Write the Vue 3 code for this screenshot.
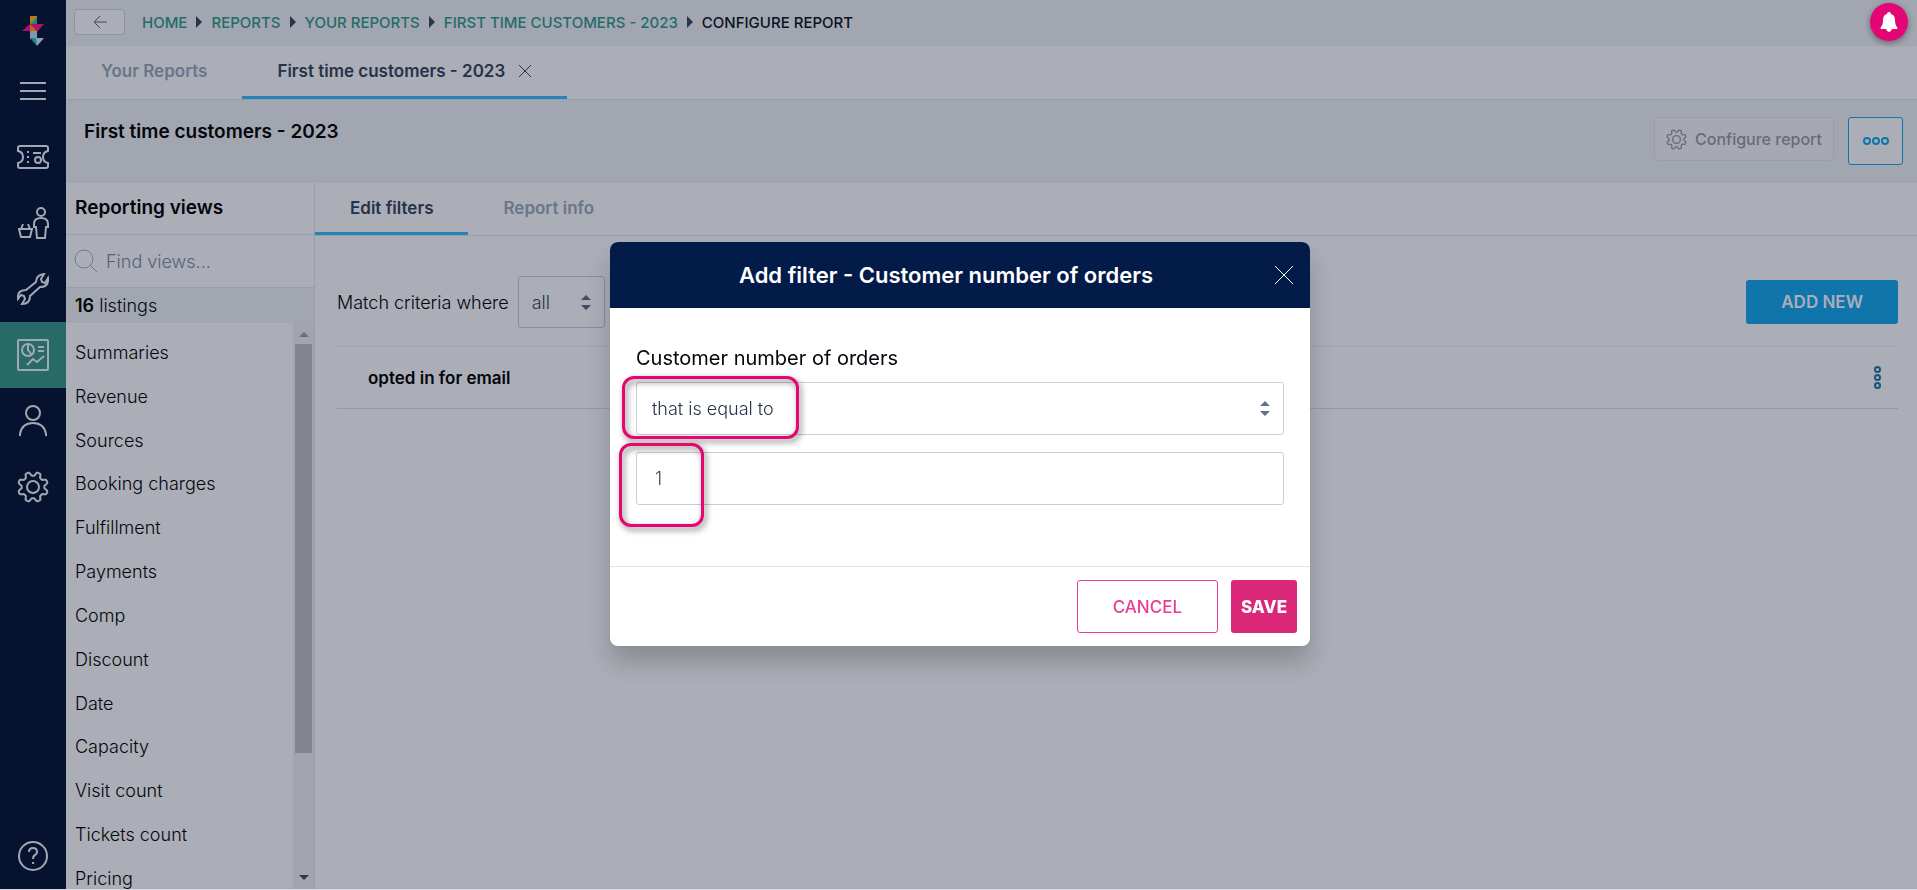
<template>
  <div class="app">
    <nav class="sidebar" aria-label="Main">
      <a href="#" class="logo" aria-label="Home">
        <svg width="22" height="30" viewBox="0 0 22 30">
          <path d="M8 0h7v8H8z" fill="#b87a1c" />
          <path d="M15 1v7H8z" fill="#1c8a7a" />
          <path d="M8 8h14l-7 8-7-1H0z" fill="#b0106a" />
          <path d="M8 8l7 7H8z" fill="#c4601c" />
          <path d="M8 15h7v8H8z" fill="#7f98b2" />
          <path d="M8 22h7v8z" fill="#1c8a7a" />
          <path d="M14 22h8l-7 8z" fill="#8ea3b8" />
        </svg>
      </a>
      <button class="side-item" aria-label="Menu">
        <svg width="30" height="30" viewBox="0 0 30 30"><path d="M2 7h26M2 15h26M2 23h26" /></svg>
      </button>
      <a href="#" class="side-item" aria-label="Tickets">
        <svg width="32" height="32" viewBox="0 0 32 32">
          <path d="M3 5h26q2 0 2 2v3q-5 1-5 6t5 6v3q0 2-2 2H3q-2 0-2-2v-3q5-1 5-6t-5-6V7q0-2 2-2z" />
          <path d="M16 12h8" />
          <circle cx="21" cy="19" r="3" />
          <path d="M11 10v2M11 15v2M11 20v2" />
        </svg>
      </a>
      <a href="#" class="side-item" aria-label="Box office">
        <svg width="32" height="32" viewBox="0 0 32 32">
          <circle cx="24" cy="5" r="4" />
          <path d="M20 31l-1-11h-2v-3q0-6 7-6t7 6v3h-2l-1 11z" />
          <path d="M1 22h15M2 22l2 8h9l2-8M4 22l2-5M13 22l-2-5" />
        </svg>
      </a>
      <a href="#" class="side-item" aria-label="Tools">
        <svg width="32" height="32" viewBox="0 0 32 32">
          <path d="M19 9q0-7 8-8l-3 5 1 3 3 1 3-5q1 9-8 9l-10 9q0 8-8 8l3-5-1-3-3-1-3 4q-1-9 8-9z" />
        </svg>
      </a>
      <a href="#" class="side-item active" aria-label="Reports">
        <svg width="32" height="32" viewBox="0 0 32 32">
          <rect x="1" y="1" width="30" height="30" rx="1" />
          <circle cx="11" cy="11" r="6" />
          <path d="M11 5v6l4 5M21 8h6M21 12h6M10 26l6-6 4 3 7-6" />
        </svg>
      </a>
      <a href="#" class="side-item" aria-label="Customers">
        <svg width="32" height="32" viewBox="0 0 32 32">
          <circle cx="16" cy="8" r="7" />
          <path d="M3 31v-2q2-11 13-11t13 11v2" />
        </svg>
      </a>
      <a href="#" class="side-item" aria-label="Settings">
        <svg width="32" height="32" viewBox="0 0 32 32">
          <path :d="gearPath" />
          <circle cx="16" cy="16" r="6" />
        </svg>
      </a>
      <a href="#" class="side-item help" aria-label="Help">
        <svg width="30" height="30" viewBox="0 0 30 30">
          <circle cx="15" cy="15" r="14" />
          <path d="M11 11q0-4 4-4t4 4q0 2-2 3t-2 4M15 21v2" />
        </svg>
      </a>
    </nav>

    <div class="page">
      <header class="topbar">
        <button class="back" aria-label="Back">
          <svg width="14" height="14" viewBox="0 0 14 14"><path d="M14 7H1M7 1L1 7l6 6" /></svg>
        </button>
        <nav class="breadcrumb" aria-label="Breadcrumb">
          <template v-for="crumb in crumbs" :key="crumb">
            <a href="#">{{ crumb }}</a>
            <i class="caret"></i>
          </template>
          <span>CONFIGURE REPORT</span>
        </nav>
      </header>

      <div class="tabs report-tabs">
        <button class="tab">Your Reports</button>
        <button class="tab active">
          First time customers - 2023
          <svg width="14" height="14" viewBox="0 0 14 14"><path d="M1 1l12 12M13 1L1 13" /></svg>
        </button>
      </div>

      <div class="report-header">
        <h1>First time customers - 2023</h1>
        <div class="report-actions">
          <button class="configure">
            <svg width="21" height="21" viewBox="0 0 32 32">
              <path :d="gearPath" />
              <circle cx="16" cy="16" r="6" />
            </svg>
            Configure report
          </button>
          <button class="more" aria-label="More actions">
            <i class="ring"></i><i class="ring"></i><i class="ring"></i>
          </button>
        </div>
      </div>

      <div class="content">
        <aside class="views">
          <h2>Reporting views</h2>
          <label class="search">
            <svg width="24" height="24" viewBox="0 0 24 24"><circle cx="10" cy="10" r="9" /><path d="M16 16l7 7" /></svg>
            <input v-model="search" type="text" placeholder="Find views..." aria-label="Find views" />
          </label>
          <div class="count"><b>16</b> listings</div>
          <div class="view-list">
            <ul>
              <li v-for="view in filteredViews" :key="view"><a href="#">{{ view }}</a></li>
            </ul>
            <div class="scrollbar">
              <i class="arrow up"></i>
              <div class="track"><div class="thumb"></div></div>
              <i class="arrow down"></i>
            </div>
          </div>
        </aside>

        <main class="editor">
          <div class="tabs">
            <button class="tab active">Edit filters</button>
            <button class="tab">Report info</button>
          </div>
          <div class="criteria">
            <label for="match">Match criteria where</label>
            <div class="select-box match">
              <select id="match" v-model="match">
                <option>all</option>
                <option>any</option>
              </select>
              <svg width="10" height="15" viewBox="0 0 10 15"><path d="M0 5l5-5 5 5zM0 10l5 5 5-5z" /></svg>
            </div>
            <button class="add-new">ADD NEW</button>
          </div>
          <div class="filter-row">
            <strong>opted in for email</strong>
            <button class="kebab" aria-label="Filter actions">
              <i class="ring"></i><i class="ring"></i><i class="ring"></i>
            </button>
          </div>
        </main>
      </div>
    </div>

    <button class="bell" aria-label="Notifications">
      <svg width="18" height="20" viewBox="0 0 18 20">
        <path d="M9 0q2 0 2 2 4 1 4 6 0 5 2 7 1 2 0 2h-5q-1 3-3 3t-3-3H1q-1 0 0-2 2-2 2-7 0-5 4-6 0-2 2-2z" />
      </svg>
    </button>

    <div class="backdrop">
      <form class="modal" role="dialog" aria-labelledby="modal-title" @submit.prevent>
        <header class="modal-header">
          <h3 id="modal-title">Add filter - Customer number of orders</h3>
          <button type="button" class="close" aria-label="Close">
            <svg width="20" height="20" viewBox="0 0 20 20"><path d="M1 1l18 18M19 1L1 19" /></svg>
          </button>
        </header>
        <div class="modal-body">
          <label for="operator">Customer number of orders</label>
          <div class="select-box">
            <select id="operator" v-model="operator">
              <option>that is equal to</option>
              <option>that is greater than</option>
              <option>that is less than</option>
            </select>
            <svg width="10" height="15" viewBox="0 0 10 15"><path d="M0 5l5-5 5 5zM0 10l5 5 5-5z" /></svg>
          </div>
          <input v-model="amount" type="text" class="amount" aria-label="Number of orders" />
        </div>
        <footer class="modal-footer">
          <button type="button" class="cancel">CANCEL</button>
          <button type="submit" class="save">SAVE</button>
        </footer>
        <div class="highlight operator-mark"></div>
        <div class="highlight amount-mark"></div>
      </form>
    </div>
  </div>
</template>

<script setup>
import { ref, computed } from 'vue';

const crumbs = ['HOME', 'REPORTS', 'YOUR REPORTS', 'FIRST TIME CUSTOMERS - 2023'];

const views = [
  'Summaries',
  'Revenue',
  'Sources',
  'Booking charges',
  'Fulfillment',
  'Payments',
  'Comp',
  'Discount',
  'Date',
  'Capacity',
  'Visit count',
  'Tickets count',
  'Pricing'
];

const search = ref('');
const match = ref('all');
const operator = ref('that is equal to');
const amount = ref('1');

const filteredViews = computed(() => {
  return views.filter(view => view.toLowerCase().includes(search.value.toLowerCase()));
});

// Gear outline: eight rounded teeth around the centre
const gearPath = (() => {
  const points = [];
  for (let i = 0; i <= 96; i++) {
    const a = (i / 96) * Math.PI * 2;
    const wave = Math.tanh(2.2 * Math.cos(a * 8 + Math.PI));
    const r = 13.2 + wave * 1.9;
    points.push(`${(16 + r * Math.sin(a)).toFixed(2)} ${(16 - r * Math.cos(a)).toFixed(2)}`);
  }
  return 'M' + points.join('L') + 'Z';
})();
</script>

<style>
body {
  margin: 0;
  background: #d5d8de;
}
</style>

<style scoped>
* {
  box-sizing: border-box;
}

.app {
  display: flex;
  height: calc(100vh - 1px);
  overflow: hidden;
  font-family: Inter, 'Liberation Sans', sans-serif;
  font-size: 18px;
  font-weight: 300;
  color: #04060c;
  background: #abaeb6;
}

button,
input,
select {
  font: inherit;
  color: inherit;
  margin: 0;
  padding: 0;
  border: 0;
  background: none;
}

a {
  color: inherit;
  text-decoration: none;
}

svg {
  display: block;
  flex: none;
  fill: none;
  stroke: currentColor;
}

h1,
h2,
h3 {
  margin: 0;
  font-weight: 500;
}

/* Sidebar */
.sidebar {
  flex: none;
  width: 66px;
  display: flex;
  flex-direction: column;
  background: #051230;
  color: #a3a7b2;
}

.logo {
  height: 58px;
  display: flex;
  justify-content: center;
  padding-top: 16px;
}

.logo svg {
  stroke: none;
}

.side-item {
  height: 66px;
  display: flex;
  align-items: center;
  justify-content: center;
}

.side-item svg {
  stroke-width: 2;
}

.side-item.active {
  background: #276a68;
}

.side-item.help {
  margin-top: auto;
}

/* Top bar */
.page {
  flex: 1;
  min-width: 0;
  display: flex;
  flex-direction: column;
}

.topbar {
  height: 46px;
  flex: none;
  display: flex;
  align-items: center;
  gap: 17px;
  padding: 0 8px 2px;
  background: #a2a6b1;
}

.back {
  width: 51px;
  height: 26px;
  display: flex;
  align-items: center;
  justify-content: center;
  border: 1px solid #8e949f;
  border-radius: 4px;
  background: #abaeb6;
  color: #3f4a5c;
}

.breadcrumb {
  display: flex;
  align-items: center;
  gap: 9px;
  font-size: 15px;
  font-weight: 500;
  color: #246c67;
}

.breadcrumb span {
  color: #0c1220;
}

.caret {
  border-left: 6px solid #27364b;
  border-top: 6px solid transparent;
  border-bottom: 6px solid transparent;
}

/* Tabs */
.tabs {
  height: 53px;
  flex: none;
  display: flex;
  border-bottom: 1px solid #999eab;
}

.tab {
  display: flex;
  align-items: center;
  gap: 13px;
  padding: 0 35px;
  border-bottom: 3px solid transparent;
  font-size: 17px;
  font-weight: 600;
  color: #6a758a;
}

.tab.active {
  border-color: #2683b7;
  color: #27324a;
}

.report-tabs {
  height: 54px;
}

/* Report header */
.report-header {
  height: 83px;
  flex: none;
  display: flex;
  justify-content: space-between;
  padding: 17px 14px 0 18px;
  background: #a2a6b1;
}

.report-header h1 {
  font-size: 19px;
  font-weight: 600;
  line-height: 30px;
}

.report-actions {
  display: flex;
  align-items: flex-start;
  gap: 14px;
}

.configure {
  height: 44px;
  display: flex;
  align-items: center;
  gap: 8px;
  padding: 0 11px;
  border: 1px solid #999ea8;
  border-radius: 3px;
  background: #a6a9b2;
  color: #676c76;
  font-size: 16px;
  font-weight: 500;
}

.configure svg {
  stroke-width: 2;
}

.more {
  width: 55px;
  height: 48px;
  display: flex;
  align-items: center;
  justify-content: center;
  gap: 1px;
  border: 1px solid #0f75ab;
  border-radius: 3px;
  background: #abaeb6;
  color: #0f75ab;
}

.ring {
  width: 8px;
  height: 8px;
  border: 2px solid currentColor;
  border-radius: 50%;
}

/* Reporting views */
.content {
  flex: 1;
  min-height: 0;
  display: flex;
}

.views {
  flex: none;
  width: 249px;
  display: flex;
  flex-direction: column;
  border-right: 1px solid #999eab;
}

.views h2 {
  height: 52px;
  flex: none;
  padding-left: 9px;
  border-bottom: 1px solid #999eab;
  font-size: 19px;
  font-weight: 600;
  line-height: 50px;
}

.search {
  height: 53px;
  flex: none;
  display: flex;
  align-items: center;
  gap: 8px;
  padding-left: 8px;
  border-bottom: 1px solid #999eab;
  color: #6f7b90;
}

.search input {
  flex: 1;
  min-width: 0;
  outline: none;
}

.search input::placeholder {
  color: #56627a;
  opacity: 1;
}

.count {
  flex: none;
  padding-left: 9px;
  background: #a2a6b1;
  line-height: 35px;
}

.count b {
  font-weight: 600;
}

.view-list {
  flex: 1;
  min-height: 0;
  display: flex;
  overflow: hidden;
}

.view-list ul {
  flex: 1;
  display: flex;
  flex-direction: column;
  margin: 0;
  padding: 20px 0 0 9px;
  list-style: none;
  line-height: 20px;
}

.view-list li {
  flex: 0 1 44px;
  display: flex;
  align-items: flex-end;
}

.view-list li:first-child {
  flex: 0 0 20px;
}

.scrollbar {
  width: 21px;
  display: flex;
  flex-direction: column;
  align-items: center;
  gap: 7px;
  padding: 9px 0;
  background: #a2a5ad;
}

.arrow {
  border-left: 5px solid transparent;
  border-right: 5px solid transparent;
}

.arrow.up {
  border-bottom: 5px solid #6c7078;
}

.arrow.down {
  border-top: 5px solid #34383f;
}

.track {
  flex: 1;
  width: 17px;
}

.thumb {
  height: 78%;
  background: #82858d;
}

/* Filter editor */
.editor {
  flex: 1;
  min-width: 0;
}

.criteria {
  display: flex;
  align-items: center;
  gap: 9px;
  margin: 0 19px 0 22px;
  padding: 40px 0 18px;
  border-bottom: 1px solid #9ea3ad;
}

.select-box {
  position: relative;
  display: flex;
  align-items: center;
}

.select-box select {
  width: 100%;
  height: 53px;
  padding: 0 15px;
  border: 1px solid #cbcdd2;
  border-radius: 3px;
  appearance: none;
}

.select-box svg {
  position: absolute;
  right: 14px;
  fill: #60728b;
  stroke: none;
  pointer-events: none;
}

.match {
  width: 87px;
}

.match select {
  height: 52px;
  padding: 0 13px;
  border-color: #888d98;
  color: #27324a;
}

.match svg {
  fill: #3f4e64;
}

.add-new {
  height: 44px;
  margin-left: auto;
  padding: 0 35px;
  border-radius: 3px;
  background: #0f75ab;
  color: #abaeb6;
  font-size: 17px;
  font-weight: 600;
}

.filter-row {
  height: 62px;
  display: flex;
  align-items: center;
  justify-content: space-between;
  margin: 0 19px 0 22px;
  padding: 0 17px 0 31px;
  border-bottom: 1px solid #929aa9;
}

.filter-row strong {
  font-weight: 600;
  font-size: 17px;
}

.kebab {
  display: flex;
  flex-direction: column;
  gap: 1px;
  color: #17527f;
}

.kebab .ring {
  width: 7px;
  height: 7px;
}

/* Notifications */
.bell {
  position: absolute;
  z-index: 3;
  top: 3px;
  right: 9px;
  width: 38px;
  height: 38px;
  display: flex;
  align-items: center;
  justify-content: center;
  border-radius: 50%;
  background: #e40675;
  color: #fff;
  box-shadow: 0 2px 6px rgba(0, 0, 0, 0.4);
}

.bell svg {
  fill: currentColor;
  stroke: none;
}

/* Modal */
.backdrop {
  position: fixed;
  inset: 0;
  z-index: 2;
  display: flex;
  align-items: center;
  justify-content: center;
  padding: 0 0 2px 3px;
}

.modal {
  position: relative;
  width: 700px;
  border-radius: 8px;
  background: #fff;
  box-shadow: 0 16px 24px rgba(0, 0, 0, 0.2);
}

.modal-header {
  height: 66px;
  display: flex;
  align-items: center;
  gap: 6px;
  padding: 0 16px 0 14px;
  border-radius: 8px 8px 0 0;
  background: #031b49;
  color: #fff;
}

.modal-header h3 {
  flex: 1;
  text-align: center;
  font-size: 22px;
  font-weight: 600;
}

.modal-body {
  display: flex;
  flex-direction: column;
  padding: 36px 26px 61px;
}

.modal-body label {
  margin-bottom: 10px;
  font-size: 20px;
  font-weight: 400;
  line-height: 28px;
}

.modal-body select {
  color: #27324a;
}

.amount {
  height: 53px;
  margin-top: 17px;
  padding: 0 18px;
  border: 1px solid #cbcdd2;
  border-radius: 3px;
  color: #3f4a5c;
}

.modal-footer {
  display: flex;
  justify-content: flex-end;
  gap: 13px;
  padding: 13px;
  border-top: 1px solid #e1e3e6;
}

.modal-footer button {
  height: 53px;
  border-radius: 3px;
  font-size: 17px;
}

.cancel {
  padding: 0 35px;
  border: 1px solid #e93d95;
  color: #e93d95;
  font-weight: 500;
}

.save {
  padding: 0 10px;
  background: #db2777;
  color: #fff;
  font-weight: 800;
}

/* Callouts drawn over the two fields */
.highlight {
  position: absolute;
  border: 3px solid #e5066f;
  border-radius: 12px;
  filter: drop-shadow(2px 3px 3px rgba(0, 0, 0, 0.55));
  pointer-events: none;
}

.operator-mark {
  left: 12px;
  top: 134px;
  width: 177px;
  height: 63px;
}

.amount-mark {
  left: 9px;
  top: 201px;
  width: 85px;
  height: 84px;
}
</style>
